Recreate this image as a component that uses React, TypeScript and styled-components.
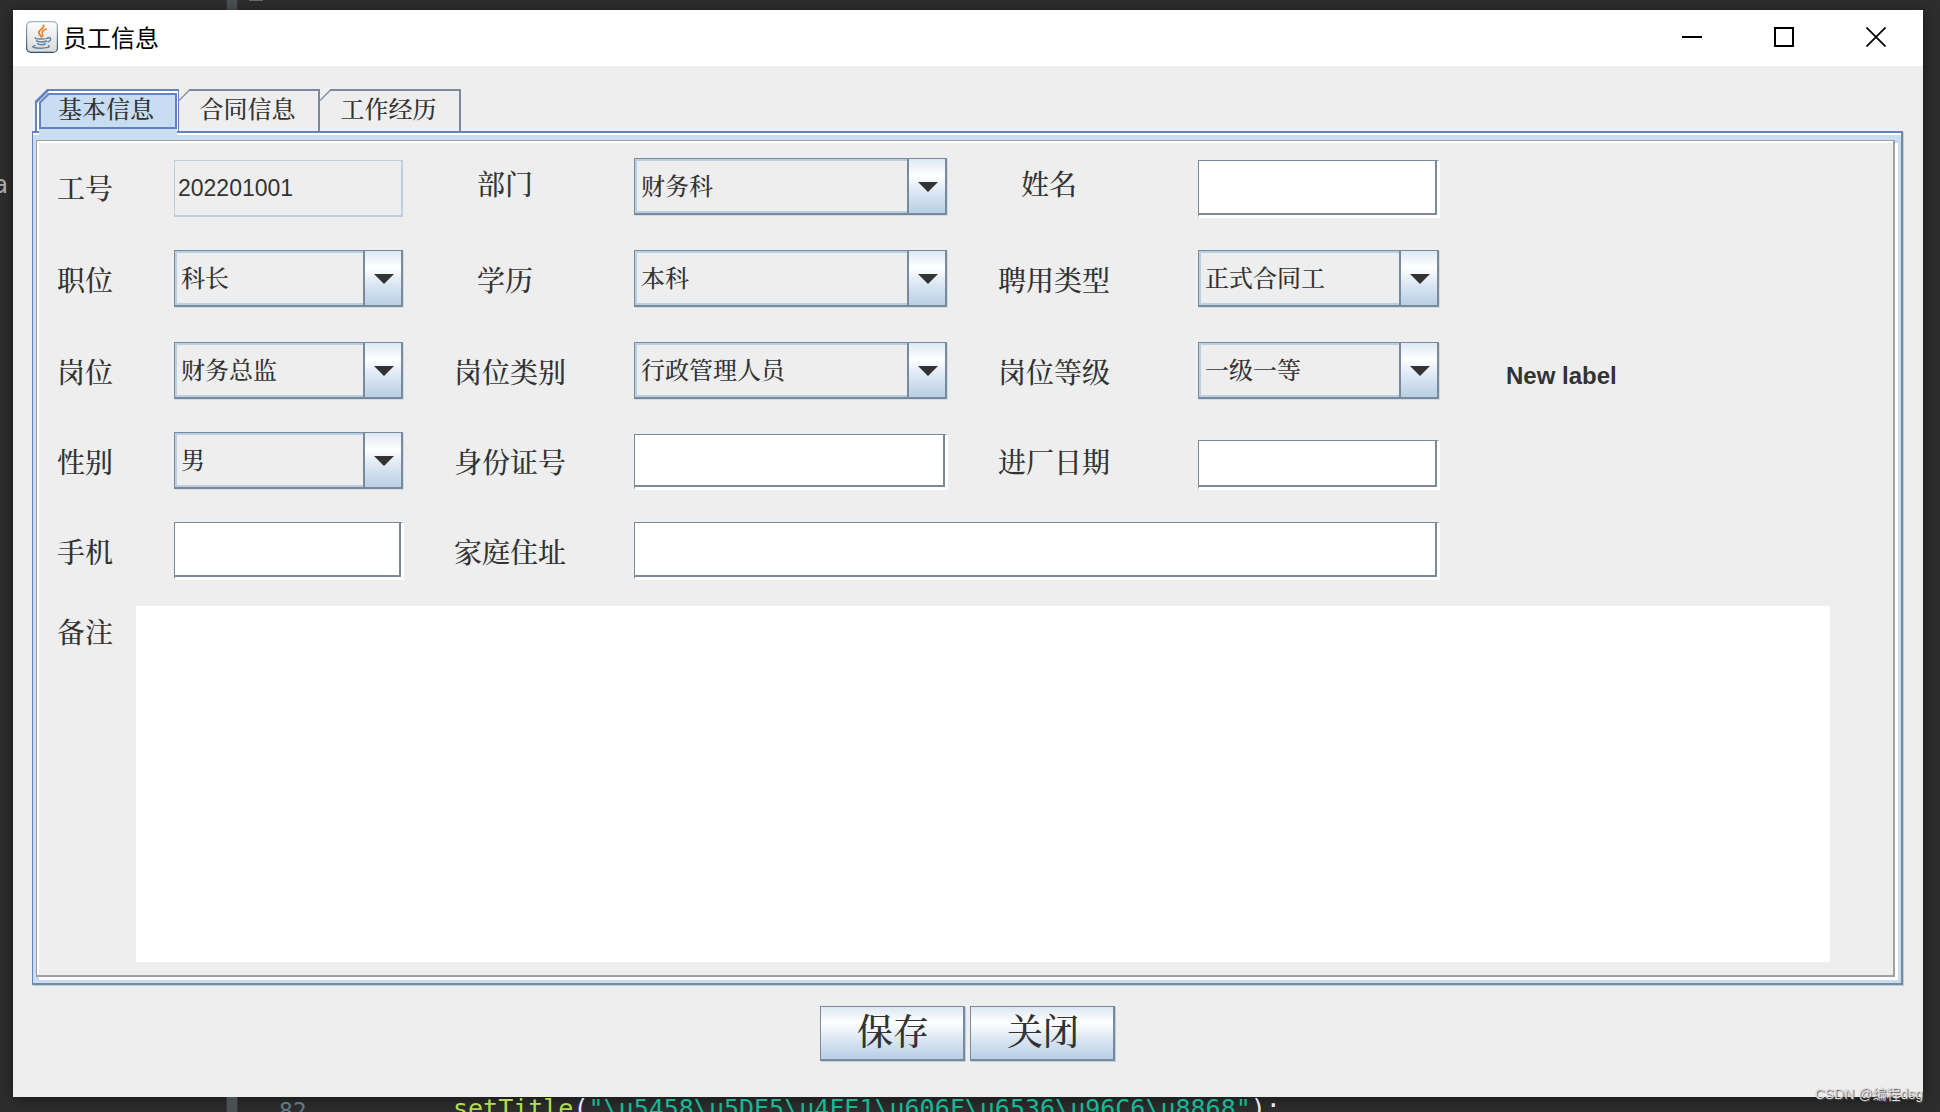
import React, { useState } from "react";
import styled, { createGlobalStyle, css } from "styled-components";

const latin = `"Liberation Sans", "Noto Sans CJK SC", sans-serif`;
const song = `"Noto Serif CJK SC", "Liberation Serif", "Noto Sans CJK SC", sans-serif`;
const slate = "#7a8a99";
const blue = "#6382bf";
const paleBlue = "#b8cfe5";
const selectedBlue = "#c8ddf2";
const ink = "#333333";
const metal = "linear-gradient(#dde8f3 0%, #ffffff 30%, #dde8f3 60%, #b8cfe5 100%)";

const GlobalStyle = createGlobalStyle`
  *, *::before, *::after { box-sizing: border-box; }
  body { margin: 0; background: #2d2d2d; font-family: ${latin}; color: ${ink}; }
  button, input, select, textarea { font: inherit; color: inherit; margin: 0; border-radius: 0; outline: none; }
`;

/* ---------- editor behind the dialog ---------- */

const Desktop = styled.div`
  position: relative;
  min-height: 100vh;
  padding: 0 17px 0 13px;
  display: flex;
  flex-direction: column;
  overflow: hidden;
  background: #2d2d2d;
`;

const EditorStrip = styled.div<{ $height: number }>`
  display: flex;
  height: ${(p) => p.$height}px;
  margin: 0 -17px 0 -13px;
  padding-left: 226px;
  overflow: hidden;
  font: 25px/24px "DejaVu Sans Mono", monospace;
  white-space: pre;
`;

const Splitter = styled.div`
  flex: none;
  width: 12px;
  height: 100%;
  background: #4b5052;
  border: solid #323436;
  border-width: 0 1px;
`;

const Underscore = styled.div`
  width: 14px;
  height: 1px;
  margin-left: 11px;
  background: #6a6a6a;
`;

const LineNumber = styled.span`
  width: 174px;
  margin-left: 41px;
  font-size: 23px;
  line-height: 28px;
  color: #5f7885;
`;

const Code = styled.code`
  font: inherit;
  color: #e6e6fa;
`;
const Method = styled.span`
  color: #b2dc50;
`;
const Str = styled.span`
  color: #17b894;
`;

const EdgeText = styled.div`
  position: absolute;
  left: -7px;
  top: 169px;
  font: 25px/32px "DejaVu Sans Mono", monospace;
  color: #a9a9a9;
`;

const Watermark = styled.div`
  position: absolute;
  right: 17px;
  bottom: 8px;
  font-size: 14px;
  line-height: 20px;
  color: #dcdcdc;
  text-shadow: 1px 1px 1px #555555;
`;

/* ---------- window ---------- */

const Window = styled.main`
  flex: 1;
  display: flex;
  flex-direction: column;
  background: #eeeeee;
  box-shadow: 0 2px 12px rgba(0, 0, 0, 0.5);
`;

const TitleBar = styled.header`
  display: flex;
  align-items: center;
  gap: 5px;
  height: 56px;
  padding: 0 1px 2px 13px;
  background: #ffffff;
`;

const Title = styled.h1`
  flex: 1;
  margin: 0;
  font: 400 24px/32px "Noto Sans CJK SC", sans-serif;
  color: #000000;
`;

const WindowControls = styled.div`
  display: flex;
  height: 100%;
`;

const ControlButton = styled.button`
  display: flex;
  align-items: center;
  justify-content: center;
  width: 92px;
  padding: 0;
  border: 0;
  background: none;
`;

const Body = styled.div`
  flex: 1;
  display: flex;
  flex-direction: column;
  padding: 23px 20px 36px 19px;
`;

/* ---------- tabs ---------- */

const TabList = styled.div`
  display: flex;
  height: 42px;
  padding-left: 3px;
`;

const chamfer = css`
  clip-path: polygon(0 12px, 12px 0, 100% 0, 100% 100%, 0 100%);
`;

const TabItem = styled.div<{ $selected: boolean }>`
  position: relative;
  width: ${(p) => (p.$selected ? 144 : 141)}px;
  ${(p) =>
    p.$selected &&
    css`
      &::after {
        content: "";
        position: absolute;
        z-index: 1;
        left: 4px;
        right: 2px;
        top: 40px;
        height: 6px;
        background: ${selectedBlue};
      }
    `}
`;

const tabText = css`
  font-family: ${song};
  font-size: 24px;
  font-weight: 500;
  line-height: 32px;
  white-space: nowrap;
`;

const SelectedTab = styled.button`
  display: flex;
  width: 100%;
  height: 100%;
  padding: 2px 1px 0 2px;
  border: 0;
  background: ${blue};
  ${tabText}
  ${chamfer}
`;

const TabGap = styled.span`
  display: flex;
  flex: 1;
  padding: 2px 1px 2px 2px;
  background: #ffffff;
  ${chamfer}
`;

const TabFocus = styled.span`
  display: flex;
  flex: 1;
  padding: 2px;
  background: ${blue};
  clip-path: polygon(0 9px, 9px 0, 100% 0, 100% 100%, 0 100%);
`;

const TabFill = styled.span`
  flex: 1;
  height: 32px;
  padding-right: 4px;
  line-height: 26px;
  background: ${selectedBlue};
  clip-path: polygon(0 8px, 8px 0, 100% 0, 100% 100%, 0 100%);
`;

const PlainTab = styled.button`
  width: 100%;
  height: 100%;
  padding: 0 2px 4px 0;
  border: 0;
  border-right: 2px solid ${slate};
  background: linear-gradient(${slate}, ${slate}) 10px 0 / 100% 2px no-repeat;
  ${tabText}
`;

const TabCorner = styled.svg`
  position: absolute;
  left: 0;
  top: 0;
`;

/* ---------- tab pane ---------- */

const Pane = styled.div`
  flex: 1;
  display: flex;
  padding: 7px 6px 6px 3px;
  border: solid;
  border-width: 2px 2px 2px 1px;
  border-color: ${blue} ${slate} ${slate} ${blue};
  background: ${selectedBlue};
  box-shadow: inset 0 2px #ffffff, 1px 1px ${paleBlue};
`;

const Sheet = styled.form`
  flex: 1;
  min-width: 0;
  display: flex;
  flex-direction: column;
  padding: 17px 0 13px 20px;
  border: solid #a0a0a0;
  border-width: 1px 2px 2px 1px;
  background: #eeeeee;
  box-shadow: inset 2px 2px #ffffff, 3px 3px #ffffff;
`;

const Fields = styled.div`
  display: grid;
  grid-template-columns: 117px 230fr 230px 314fr 250px 242fr 453fr;
  grid-template-rows: 60px 60px 58px 58px 58px;
  row-gap: 32px;
`;

const Label = styled.label<{ $center?: "short" | "long"; $high?: boolean }>`
  height: 58px;
  font-family: ${song};
  font-size: 28px;
  font-weight: 500;
  line-height: ${(p) => (p.$high ? 50 : 58)}px;
  white-space: nowrap;
  ${(p) =>
    p.$center &&
    css`
      width: ${p.$center === "short" ? 202 : 212}px;
      text-align: center;
    `}
`;

const SideNote = styled.span`
  padding-left: 66px;
  font-size: 24px;
  font-weight: 700;
  line-height: 68px;
`;

const TextBox = styled.input<{ $height: number; $wide?: boolean }>`
  align-self: end;
  width: 100%;
  min-width: 0;
  height: ${(p) => p.$height}px;
  padding: 0 6px 0 3px;
  grid-column: ${(p) => (p.$wide ? "span 3" : "auto")};
  border: solid;
  border-width: 1px 3px 3px 1px;
  border-color: ${slate} #ffffff #ffffff ${slate};
  background: #ffffff;
  box-shadow: inset -2px -2px ${slate};
  font-size: 23px;
`;

const ReadOnlyBox = styled.input`
  align-self: start;
  width: calc(100% - 1px);
  min-width: 0;
  height: 57px;
  margin-top: 2px;
  padding: 0 3px;
  border: solid ${paleBlue};
  border-width: 1px 2px 2px 1px;
  background: #eeeeee;
  font-size: 23px;
`;

const ComboFrame = styled.div`
  position: relative;
  width: calc(100% - 1px);
  height: 57px;
  border: solid ${slate};
  border-width: 1px 2px 2px 1px;
  box-shadow: 1px 1px #d0dce8;
`;

const ComboSelect = styled.select`
  appearance: none;
  display: block;
  width: 100%;
  height: 100%;
  padding: 0 40px 4px 4px;
  border: 2px solid ${paleBlue};
  background: #eeeeee;
  font-family: ${song};
  font-size: 24px;
  font-weight: 500;
`;

const ComboArrow = styled.span`
  position: absolute;
  top: 0;
  right: 0;
  bottom: 0;
  width: 38px;
  display: flex;
  align-items: center;
  justify-content: center;
  padding: 2px 0 0 2px;
  border-left: 2px solid ${slate};
  background: ${metal};
  pointer-events: none;
`;

const Remarks = styled.div`
  flex: 1;
  display: flex;
  margin: 26px 63px 0 0;
`;

const RemarksLabel = styled(Label)`
  width: 79px;
  height: 50px;
  line-height: 50px;
`;

const RemarksArea = styled.textarea`
  flex: 1;
  min-width: 0;
  min-height: 120px;
  padding: 4px;
  border: 0;
  background: #ffffff;
  resize: none;
  font-family: ${song};
  font-size: 24px;
`;

const Actions = styled.div`
  display: flex;
  justify-content: center;
  gap: 5px;
  margin-top: 21px;
`;

const ActionButton = styled.button`
  width: 145px;
  height: 55px;
  padding: 0 0 6px 2px;
  border: solid ${slate};
  border-width: 1px 2px 2px 1px;
  background: ${metal};
  box-shadow: 1px 1px ${paleBlue};
  font-family: ${song};
  font-size: 36px;
  font-weight: 500;
  line-height: 46px;
`;

/* ---------- parts ---------- */

function JavaIcon() {
  return (
    <svg width="32" height="32" viewBox="0 0 32 32" aria-hidden="true">
      <defs>
        <linearGradient id="plate" x1="0" y1="0" x2="0" y2="1">
          <stop offset="0" stopColor="#ffffff" />
          <stop offset="1" stopColor="#d9d9d9" />
        </linearGradient>
        <linearGradient id="rim" x1="0" y1="0" x2="0" y2="1">
          <stop offset="0" stopColor="#9db4c6" />
          <stop offset="1" stopColor="#2f5068" />
        </linearGradient>
      </defs>
      <rect x="0.6" y="0.6" width="30.8" height="30.8" rx="4.5" fill="url(#plate)" stroke="url(#rim)" strokeWidth="1.2" />
      <g fill="none" strokeLinecap="round">
        <path d="M17.6 4.4c1 2.8-4.8 4.2-4.8 7 0 1.7 1.7 2.6 2.3 4.2" stroke="#ea7d24" strokeWidth="1.8" />
        <path d="M20.2 8c-2.6 1-4.2 2-4.2 3.6 0 1.5 1.6 2 .5 4.2" stroke="#ea7d24" strokeWidth="1.4" />
        <path d="M9.4 16.600c-2.400 1.700 10.600 2 13 .1" stroke="#5f86a6" strokeWidth="1.3" />
        <path d="M10.6 19.600c1 1.700 8 1.700 10 .4" stroke="#5f86a6" strokeWidth="1.5" />
        <path d="M11.6 22.600c1 1.500 6.400 1.300 7.800.2" stroke="#5f86a6" strokeWidth="1.5" />
        <path d="M21.8 16.800c3.600-1.200 4 2.800.2 4" stroke="#5f86a6" strokeWidth="1.4" />
        <path d="M9 24.600c-5 .9-1 2.600 5.600 2.600 6.400 0 10.200-1.200 8-2.600" stroke="#5f86a6" strokeWidth="1.4" />
      </g>
    </svg>
  );
}

function Combo({ id, options }: { id: string; options: string[] }) {
  return (
    <ComboFrame>
      <ComboSelect id={id} defaultValue={options[0]}>
        {options.map((o) => (
          <option key={o}>{o}</option>
        ))}
      </ComboSelect>
      <ComboArrow aria-hidden="true">
        <svg width="20" height="10" viewBox="0 0 20 10">
          <path d="M0 0h20L10 10z" fill={ink} />
        </svg>
      </ComboArrow>
    </ComboFrame>
  );
}

const tabs = ["基本信息", "合同信息", "工作经历"];

export default function App() {
  const [active, setActive] = useState(0);
  return (
    <>
      <GlobalStyle />
      <Desktop>
        <EditorStrip $height={10}>
          <Splitter />
          <Underscore />
        </EditorStrip>
        <EdgeText>a</EdgeText>
        <Window>
          <TitleBar>
            <JavaIcon />
            <Title>员工信息</Title>
            <WindowControls>
              <ControlButton type="button" aria-label="最小化">
                <svg width="20" height="20" viewBox="0 0 20 20">
                  <path d="M0 9h20v2H0z" />
                </svg>
              </ControlButton>
              <ControlButton type="button" aria-label="最大化">
                <svg width="20" height="20" viewBox="0 0 20 20">
                  <path d="M1 1h18v18H1z" fill="none" stroke="#000" strokeWidth="2" />
                </svg>
              </ControlButton>
              <ControlButton type="button" aria-label="关闭窗口">
                <svg width="20" height="20" viewBox="0 0 20 20">
                  <path d="M0.5 0.5l19 19M19.5 0.5l-19 19" fill="none" stroke="#000" strokeWidth="1.7" />
                </svg>
              </ControlButton>
            </WindowControls>
          </TitleBar>
          <Body>
            <TabList role="tablist">
              {tabs.map((name, i) => (
                <TabItem key={name} $selected={i === active} role="presentation">
                  {i === active ? (
                    <SelectedTab type="button" role="tab" aria-selected="true">
                      <TabGap>
                        <TabFocus>
                          <TabFill>{name}</TabFill>
                        </TabFocus>
                      </TabGap>
                    </SelectedTab>
                  ) : (
                    <>
                      <PlainTab type="button" role="tab" aria-selected="false" onClick={() => setActive(i)}>
                        {name}
                      </PlainTab>
                      <TabCorner width="11" height="12" viewBox="0 0 11 12" aria-hidden="true">
                        <path d="M0 11.5L10.5 1" fill="none" stroke={slate} strokeWidth="1.2" />
                      </TabCorner>
                    </>
                  )}
                </TabItem>
              ))}
            </TabList>
            <Pane role="tabpanel">
              <Sheet id="employee" onSubmit={(e) => e.preventDefault()}>
                <Fields>
                  <Label htmlFor="number">工号</Label>
                  <ReadOnlyBox id="number" readOnly value="202201001" />
                  <Label htmlFor="department" $center="short" $high>部门</Label>
                  <Combo id="department" options={["财务科"]} />
                  <Label htmlFor="name" $center="short" $high>姓名</Label>
                  <TextBox id="name" $height={58} />
                  <span />

                  <Label htmlFor="position">职位</Label>
                  <Combo id="position" options={["科长"]} />
                  <Label htmlFor="education" $center="short">学历</Label>
                  <Combo id="education" options={["本科"]} />
                  <Label htmlFor="hiring" $center="long">聘用类型</Label>
                  <Combo id="hiring" options={["正式合同工"]} />
                  <span />

                  <Label htmlFor="post">岗位</Label>
                  <Combo id="post" options={["财务总监"]} />
                  <Label htmlFor="post-type" $center="long">岗位类别</Label>
                  <Combo id="post-type" options={["行政管理人员"]} />
                  <Label htmlFor="post-grade" $center="long">岗位等级</Label>
                  <Combo id="post-grade" options={["一级一等"]} />
                  <SideNote>New label</SideNote>

                  <Label htmlFor="gender">性别</Label>
                  <Combo id="gender" options={["男", "女"]} />
                  <Label htmlFor="identity" $center="long">身份证号</Label>
                  <TextBox id="identity" $height={56} />
                  <Label htmlFor="entry-date" $center="long">进厂日期</Label>
                  <TextBox id="entry-date" $height={50} />
                  <span />

                  <Label htmlFor="phone">手机</Label>
                  <TextBox id="phone" $height={58} />
                  <Label htmlFor="address" $center="long">家庭住址</Label>
                  <TextBox id="address" $height={58} $wide />
                </Fields>
                <Remarks>
                  <RemarksLabel htmlFor="remarks">备注</RemarksLabel>
                  <RemarksArea id="remarks" />
                </Remarks>
              </Sheet>
            </Pane>
            <Actions>
              <ActionButton type="submit" form="employee">保存</ActionButton>
              <ActionButton type="button">关闭</ActionButton>
            </Actions>
          </Body>
        </Window>
        <EditorStrip $height={15}>
          <Splitter />
          <LineNumber>82</LineNumber>
          <Code>
            <Method>setTitle</Method>(<Str>{'"\\u5458\\u5DE5\\u4FE1\\u606F\\u6536\\u96C6\\u8868"'}</Str>);
          </Code>
        </EditorStrip>
        <Watermark>CSDN @编程dsg</Watermark>
      </Desktop>
    </>
  );
}
